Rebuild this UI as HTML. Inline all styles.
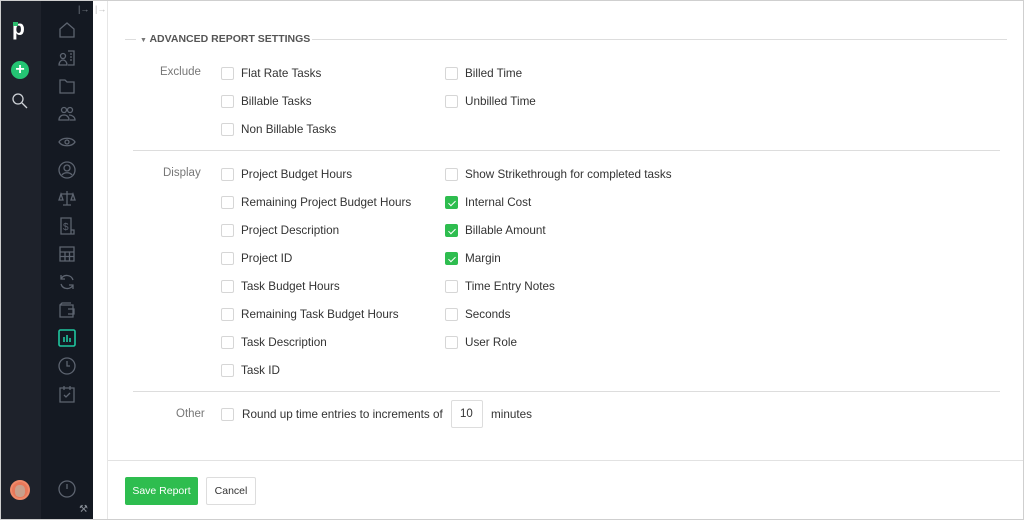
<!DOCTYPE html>
<html><head><style>
*{margin:0;padding:0;box-sizing:border-box}
body{width:1024px;height:520px;overflow:hidden;background:#fff;font-family:"Liberation Sans",sans-serif;position:relative}
.a{position:absolute}
.cb{position:absolute;width:13px;height:13px;border:1px solid #d6d6d6;border-radius:2px;background:#fff}
.cb.on{background:#2ebd4f;border-color:#2ebd4f}
.cb.on:after{content:"";position:absolute;left:4px;top:1.5px;width:3px;height:6px;border:solid #fff;border-width:0 1.6px 1.6px 0;transform:rotate(45deg)}
.t{position:absolute;font-size:11.7px;color:#333;line-height:14px;top:0}
.l{position:absolute;font-size:11.5px;color:#777;line-height:14px}
.hr{position:absolute;height:1px;background:#ddd}
svg.i{position:absolute;width:20px;height:20px;fill:none;stroke:#5d6470;stroke-width:1.3}
.btn{position:absolute;display:flex;align-items:center;justify-content:center;font-size:10.5px;border-radius:2px}
</style></head><body>
<div class="a" style="left:0;top:0;width:1024px;height:520px;border:1px solid #cfcfcf;pointer-events:none;z-index:9"></div>
<div class="a" style="left:0;top:0;width:41px;height:520px;background:#1e222b"></div>
<div class="a" style="left:41px;top:0;width:52px;height:520px;background:#141922"></div>
<div class="a" style="left:93px;top:0;width:15px;height:520px;background:#fff;border-right:1px solid #e6e6e6"></div>
<div class="a" style="left:78px;top:4px;color:#7a808a;font-size:9px">|→</div>
<div class="a" style="left:95px;top:4px;color:#bbb;font-size:9px">|→</div>
<div class="a" style="left:12px;top:19px;color:#fff;font-weight:bold;font-size:21px;line-height:20px">p</div>
<div class="a" style="left:13px;top:22px;width:5px;height:4px;background:#2ebd6f"></div>
<div class="a" style="left:11px;top:61px;width:18px;height:18px;border-radius:50%;background:#24c473;color:#fff;font-size:16px;font-weight:bold;line-height:18px;text-align:center">+</div>
<svg class="i" style="left:10px;top:91px;stroke:#cfd3d8" viewBox="0 0 20 20"><circle cx="8" cy="8" r="5"/><path d="M12 12l5 5"/></svg>
<svg class="i" style="left:57px;top:20px" viewBox="0 0 20 20"><path d="M3 9l7-6 7 6v8H3z"/></svg>
<svg class="i" style="left:57px;top:48px" viewBox="0 0 20 20"><circle cx="6" cy="8" r="2.5"/><path d="M2 17c0-3 2-5 4-5s4 2 4 5zM11 3h6v14h-6M13 6h2M13 9h2M13 12h2"/></svg>
<svg class="i" style="left:57px;top:76px" viewBox="0 0 20 20"><path d="M3 4h5l2 2h7v11H3z"/></svg>
<svg class="i" style="left:57px;top:104px" viewBox="0 0 20 20"><circle cx="7" cy="6" r="2.5"/><circle cx="13" cy="6" r="2.5"/><path d="M2 16c0-3 2-5 5-5s5 2 5 5zM12 11c3 0 6 2 6 5h-5"/></svg>
<svg class="i" style="left:57px;top:132px" viewBox="0 0 20 20"><path d="M2 10c3-5 13-5 16 0-3 5-13 5-16 0z"/><circle cx="10" cy="10" r="2"/></svg>
<svg class="i" style="left:57px;top:160px" viewBox="0 0 20 20"><circle cx="10" cy="10" r="8"/><circle cx="10" cy="8" r="3"/><path d="M5 15c2-3 8-3 10 0"/></svg>
<svg class="i" style="left:57px;top:188px" viewBox="0 0 20 20"><path d="M10 3v14M6 17h8M4 6h12M4 6l-2 6h4zM16 6l-2 6h4z"/></svg>
<svg class="i" style="left:57px;top:216px" viewBox="0 0 20 20"><path d="M4 2h10v16H4zM14 14h3v4h-3"/><text x="6" y="14" font-size="10" fill="#5d6470" stroke="none" font-family="Liberation Sans">$</text></svg>
<svg class="i" style="left:57px;top:244px" viewBox="0 0 20 20"><path d="M3 3h14v14H3zM3 8h14M3 12.5h14M8 8v9M12.5 8v9"/></svg>
<svg class="i" style="left:57px;top:272px" viewBox="0 0 20 20"><path d="M16 8a6.5 6.5 0 0 0-12-1M4 12a6.5 6.5 0 0 0 12 1M4 3v4h4M16 17v-4h-4"/></svg>
<svg class="i" style="left:57px;top:300px" viewBox="0 0 20 20"><path d="M3 5h13v12H3zM3 5l2-2h9M11 9h6v5h-6"/></svg>
<svg class="i" style="left:57px;top:328px;stroke:#1fc7a0;stroke-width:1.6" viewBox="0 0 20 20"><rect x="2" y="2" width="16" height="16" rx="1.5"/><path d="M7 14V9M10 14V7M13 14V10"/></svg>
<svg class="i" style="left:57px;top:356px" viewBox="0 0 20 20"><circle cx="10" cy="10" r="8"/><path d="M10 5v5h3"/></svg>
<svg class="i" style="left:57px;top:384px" viewBox="0 0 20 20"><path d="M3 4h14v14H3zM7 2v4M13 2v4M7 11l2 2 4-4"/></svg>
<svg class="i" style="left:57px;top:479px" viewBox="0 0 20 20"><circle cx="10" cy="10" r="8"/><path d="M10 5v5"/></svg>
<div class="a" style="left:79px;top:504px;color:#8a9099;font-size:10px">⚒</div>
<div class="a" style="left:10px;top:480px;width:20px;height:20px;border-radius:50%;background:#e8785a;border:2px solid #f08a6a"><div style="margin:3px auto;width:10px;height:12px;border-radius:40%;background:#c9a08c"></div></div>
<div class="hr" style="left:125px;top:39px;width:11px"></div>
<div class="a" style="left:140px;top:33px;font-size:10.5px;color:#555;line-height:13px;font-weight:bold"><span style="font-size:7px;color:#777">▼</span> ADVANCED REPORT SETTINGS</div>
<div class="hr" style="left:312px;top:39px;width:695px"></div>
<div class="l" style="left:160px;top:65px">Exclude</div>
<div class="cb" style="left:221px;top:67px"></div><div class="t" style="left:241px;top:67px">Flat Rate Tasks</div>
<div class="cb" style="left:221px;top:95px"></div><div class="t" style="left:241px;top:95px">Billable Tasks</div>
<div class="cb" style="left:221px;top:123px"></div><div class="t" style="left:241px;top:123px">Non Billable Tasks</div>
<div class="cb" style="left:445px;top:67px"></div><div class="t" style="left:465px;top:67px">Billed Time</div>
<div class="cb" style="left:445px;top:95px"></div><div class="t" style="left:465px;top:95px">Unbilled Time</div>
<div class="hr" style="left:133px;top:150px;width:867px"></div>
<div class="l" style="left:163px;top:166px">Display</div>
<div class="cb" style="left:221px;top:168px"></div><div class="t" style="left:241px;top:168px">Project Budget Hours</div>
<div class="cb" style="left:221px;top:196px"></div><div class="t" style="left:241px;top:196px">Remaining Project Budget Hours</div>
<div class="cb" style="left:221px;top:224px"></div><div class="t" style="left:241px;top:224px">Project Description</div>
<div class="cb" style="left:221px;top:252px"></div><div class="t" style="left:241px;top:252px">Project ID</div>
<div class="cb" style="left:221px;top:280px"></div><div class="t" style="left:241px;top:280px">Task Budget Hours</div>
<div class="cb" style="left:221px;top:308px"></div><div class="t" style="left:241px;top:308px">Remaining Task Budget Hours</div>
<div class="cb" style="left:221px;top:336px"></div><div class="t" style="left:241px;top:336px">Task Description</div>
<div class="cb" style="left:221px;top:364px"></div><div class="t" style="left:241px;top:364px">Task ID</div>
<div class="cb" style="left:445px;top:168px"></div><div class="t" style="left:465px;top:168px">Show Strikethrough for completed tasks</div>
<div class="cb on" style="left:445px;top:196px"></div><div class="t" style="left:465px;top:196px">Internal Cost</div>
<div class="cb on" style="left:445px;top:224px"></div><div class="t" style="left:465px;top:224px">Billable Amount</div>
<div class="cb on" style="left:445px;top:252px"></div><div class="t" style="left:465px;top:252px">Margin</div>
<div class="cb" style="left:445px;top:280px"></div><div class="t" style="left:465px;top:280px">Time Entry Notes</div>
<div class="cb" style="left:445px;top:308px"></div><div class="t" style="left:465px;top:308px">Seconds</div>
<div class="cb" style="left:445px;top:336px"></div><div class="t" style="left:465px;top:336px">User Role</div>
<div class="hr" style="left:133px;top:391px;width:867px"></div>
<div class="l" style="left:176px;top:407px">Other</div>
<div class="cb" style="left:221px;top:408px"></div><div class="t" style="left:242px;top:408px">Round up time entries to increments of</div>
<div class="a" style="left:451px;top:400px;width:32px;height:28px;border:1px solid #ddd;border-radius:2px;font-size:11.5px;color:#333;line-height:26px;padding-left:8px">10</div>
<div class="t" style="left:491px;top:408px">minutes</div>
<div class="hr" style="left:108px;top:460px;width:916px;background:#e2e2e2"></div>
<div class="btn" style="left:125px;top:477px;width:73px;height:28px;background:#2ebd4f;color:#fff">Save Report</div>
<div class="btn" style="left:206px;top:477px;width:50px;height:28px;border:1px solid #ddd;color:#333">Cancel</div>
</body></html>
